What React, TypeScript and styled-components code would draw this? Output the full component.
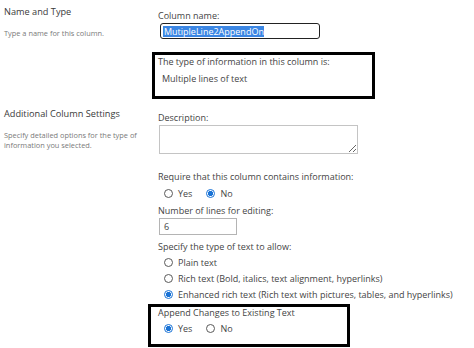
import React from 'react';
import styled, { createGlobalStyle } from 'styled-components';

// 열 설정 화면 (Name and Type / Additional Column Settings)

const GlobalStyle = createGlobalStyle`
	body {
		margin: 0;
		background: #ffffff;
		font-family: 'Open Sans', 'Noto Sans', sans-serif;
		color: #444444;
	}
`;

const Page = styled.div`
	display: grid;
	grid-template-columns: 148px 1fr;
	width: 474px;
	height: 348px;
	overflow: hidden;
`;

const SideCell = styled.div<{ $top: number }>`
	padding: ${(p) => p.$top}px 0 0 4px;
`;

const MainCell = styled.div<{ $top: number }>`
	display: flex;
	flex-direction: column;
	align-items: flex-start;
	padding-top: ${(p) => p.$top}px;
`;

const SectionTitle = styled.div`
	font-size: 9.2px;
	line-height: 14px;
	color: #3a3a3a;
`;

const SectionHint = styled.div<{ $top: number }>`
	margin-top: ${(p) => p.$top}px;
	width: 136px;
	font-size: 7.4px;
	line-height: 10px;
	color: #7a7a7a;
`;

const Label = styled.div<{ $top?: number }>`
	margin: ${(p) => p.$top ?? 0}px 0 0 10px;
	font-size: 9px;
	line-height: 14px;
	color: #444444;
	white-space: nowrap;
`;

const NameInput = styled.div`
	display: flex;
	align-items: center;
	box-sizing: border-box;
	width: 160px;
	height: 16px;
	margin-left: 12px;
	padding-left: 2px;
	border: 1.5px solid #222222;
	border-radius: 3px;
	font-size: 9px;
`;

const Selected = styled.span`
	background: #3b86e3;
	color: #ffffff;
	line-height: 11px;
	padding-left: 1px;
`;

const Callout = styled.div<{ $left: number; $width: number; $top: number; $pad: number; $bottom: number }>`
	box-sizing: border-box;
	width: ${(p) => p.$width}px;
	margin: ${(p) => p.$top}px 0 0 ${(p) => p.$left}px;
	padding: 0 0 ${(p) => p.$bottom}px ${(p) => p.$pad}px;
	border: 3px solid #000000;
`;

const CalloutLabel = styled.div<{ $lh: number }>`
	font-size: 9px;
	line-height: ${(p) => p.$lh}px;
	color: #444444;
	white-space: nowrap;
`;

const CalloutValue = styled.div`
	margin: 3px 0 0 4px;
	font-size: 9px;
	line-height: 14px;
	color: #444444;
`;

const DescriptionBox = styled.textarea`
	box-sizing: border-box;
	width: 199px;
	height: 29px;
	margin-left: 11px;
	border: 1px solid #c4c4c4;
	border-radius: 0;
	resize: vertical;
	outline: none;
	font-family: inherit;
`;

const LinesInput = styled.div`
	box-sizing: border-box;
	width: 78px;
	height: 17px;
	margin-left: 11px;
	padding-left: 4px;
	border: 1px solid #b4b4b4;
	font-size: 9px;
	line-height: 15px;
	color: #444444;
`;

const RadioRow = styled.div<{ $top: number; $left: number }>`
	display: flex;
	gap: 14px;
	margin: ${(p) => p.$top}px 0 0 ${(p) => p.$left}px;
`;

const RadioOption = styled.label`
	display: flex;
	align-items: center;
	gap: 5px;
	font-size: 9px;
	line-height: 14px;
	color: #444444;
	white-space: nowrap;
`;

const RadioDot = styled.span<{ $on: boolean }>`
	box-sizing: border-box;
	width: 9px;
	height: 9px;
	border-radius: 50%;
	border: 1px solid ${(p) => (p.$on ? '#1a73d6' : '#5a5a5a')};
	background: ${(p) => (p.$on ? 'radial-gradient(circle, #1a73d6 0 2.4px, #ffffff 2.9px)' : '#ffffff')};
	flex: none;
`;

type Choice = { text: string; on?: boolean };

const Radios = ({ items, top, left = 16 }: { items: Choice[]; top: number; left?: number }) => (
	<RadioRow $top={top} $left={left}>
		{items.map((it) => (
			<RadioOption key={it.text}>
				<RadioDot $on={!!it.on} />
				{it.text}
			</RadioOption>
		))}
	</RadioRow>
);

const App = () => {
	return (
		<React.Fragment>
			<GlobalStyle />
			<Page>
				<SideCell $top={5}>
					<SectionTitle>Name and Type</SectionTitle>
					<SectionHint $top={9}>Type a name for this column.</SectionHint>
				</SideCell>
				<MainCell $top={9}>
					<Label>Column name:</Label>
					<NameInput>
						<Selected>MutipleLine2AppendOn</Selected>
					</NameInput>
					<Callout $left={4} $width={223} $top={13} $pad={3} $bottom={10}>
						<CalloutLabel $lh={14}>The type of information in this column is:</CalloutLabel>
						<CalloutValue>Multiple lines of text</CalloutValue>
					</Callout>
				</MainCell>

				<SideCell $top={6}>
					<SectionTitle>Additional Column Settings</SectionTitle>
					<SectionHint $top={9}>Specify detailed options for the type of information you selected.</SectionHint>
				</SideCell>
				<MainCell $top={10}>
					<Label>Description:</Label>
					<DescriptionBox />
					<Label $top={16}>Require that this column contains information:</Label>
					<Radios top={3} items={[{ text: 'Yes' }, { text: 'No', on: true }]} />
					<Label $top={3}>Number of lines for editing:</Label>
					<LinesInput>6</LinesInput>
					<Label $top={5}>Specify the type of text to allow:</Label>
					<Radios top={2} items={[{ text: 'Plain text' }]} />
					<Radios top={2} items={[{ text: 'Rich text (Bold, italics, text alignment, hyperlinks)' }]} />
					<Radios
						top={2}
						items={[{ text: 'Enhanced rich text (Rich text with pictures, tables, and hyperlinks)', on: true }]}
					/>
					<Callout $left={0} $width={202} $top={2} $pad={7} $bottom={8}>
						<CalloutLabel $lh={12}>Append Changes to Existing Text</CalloutLabel>
						<Radios top={3} left={6} items={[{ text: 'Yes', on: true }, { text: 'No' }]} />
					</Callout>
				</MainCell>
			</Page>
		</React.Fragment>
	);
};

export default App;
